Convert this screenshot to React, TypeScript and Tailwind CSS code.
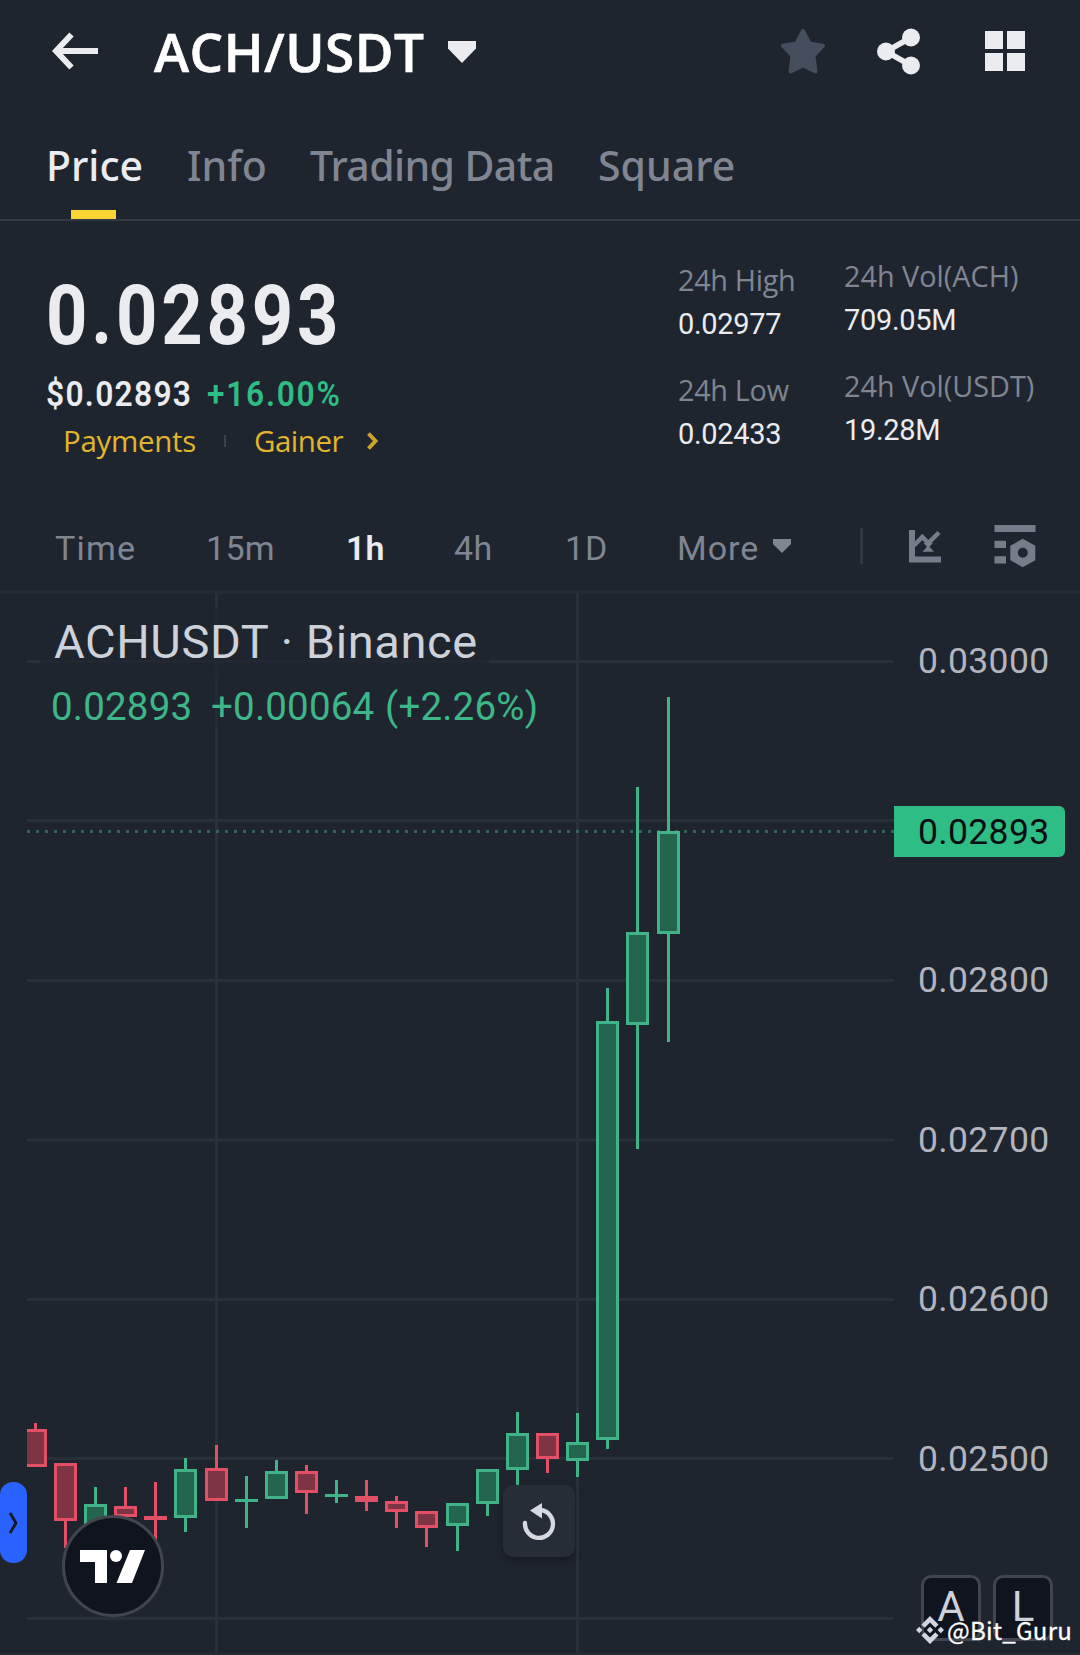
import type { ReactNode } from "react";

type Candle = {
  x: number;
  top: number;
  bottom: number;
  high: number;
  low: number;
  up: boolean;
};

const candles: Candle[] = [
  { x: 24, top: 1429, bottom: 1467, high: 1423, low: 1467, up: false },
  { x: 54, top: 1463, bottom: 1521, high: 1463, low: 1548, up: false },
  { x: 84, top: 1504, bottom: 1530, high: 1487, low: 1530, up: true },
  { x: 114, top: 1506, bottom: 1517, high: 1487, low: 1517, up: false },
  { x: 144, top: 1516, bottom: 1520, high: 1482, low: 1542, up: false },
  { x: 174, top: 1469, bottom: 1518, high: 1458, low: 1532, up: true },
  { x: 205, top: 1468, bottom: 1501, high: 1445, low: 1501, up: false },
  { x: 235, top: 1499, bottom: 1502, high: 1476, low: 1528, up: true },
  { x: 265, top: 1471, bottom: 1499, high: 1460, low: 1499, up: true },
  { x: 295, top: 1471, bottom: 1493, high: 1465, low: 1514, up: false },
  { x: 325, top: 1494, bottom: 1497, high: 1480, low: 1503, up: true },
  { x: 355, top: 1496, bottom: 1502, high: 1480, low: 1511, up: false },
  { x: 385, top: 1501, bottom: 1512, high: 1496, low: 1528, up: false },
  { x: 415, top: 1511, bottom: 1528, high: 1511, low: 1547, up: false },
  { x: 446, top: 1503, bottom: 1526, high: 1503, low: 1551, up: true },
  { x: 476, top: 1469, bottom: 1504, high: 1469, low: 1516, up: true },
  { x: 506, top: 1433, bottom: 1470, high: 1412, low: 1485, up: true },
  { x: 536, top: 1433, bottom: 1459, high: 1433, low: 1473, up: false },
  { x: 566, top: 1442, bottom: 1461, high: 1413, low: 1477, up: true },
  { x: 596, top: 1021, bottom: 1440, high: 988, low: 1449, up: true },
  { x: 626, top: 932, bottom: 1025, high: 787, low: 1149, up: true },
  { x: 657, top: 831, bottom: 934, high: 697, low: 1042, up: true },
];

const gridRows = [661.5, 820.5, 980.5, 1140, 1299.5, 1458.5, 1618.5];
const gridCols = [216.5, 577.5];

function CandleShape({ x, top, bottom, high, low, up }: Candle) {
  const line = up ? "#40b488" : "#e34f65";
  const fill = up ? "#24654f" : "#7f3444";
  const h = bottom - top;

  return (
    <g>
      {high < top && <rect x={x + 10} y={high} width={3} height={top - high} fill={line} />}
      {low > bottom && <rect x={x + 10} y={bottom} width={3} height={low - bottom} fill={line} />}
      <rect x={x} y={top} width={23} height={h} fill={line} />
      {h > 6 && <rect x={x + 3} y={top + 3} width={17} height={h - 6} fill={fill} />}
    </g>
  );
}

function CandleChart() {
  return (
    <svg className="block h-[1063px] w-[1080px]" viewBox="0 592 1080 1063">
      <defs>
        <clipPath id="plot">
          <rect x="27" y="592" width="867" height="1063" />
        </clipPath>
      </defs>
      <g clipPath="url(#plot)">
        {gridRows.map((y) => (
          <rect key={y} x="27" y={y - 1.5} width="867" height="3" fill="#2a303a" />
        ))}
        {gridCols.map((x) => (
          <rect key={x} x={x - 1.5} y="592" width="3" height="1061" fill="#2a303a" />
        ))}
        <line x1="27" y1="831.5" x2="894" y2="831.5" stroke="#356558" strokeWidth="3" strokeDasharray="3 6" />
        {candles.map((c) => (
          <CandleShape key={c.x} {...c} />
        ))}
      </g>
      <rect x="0" y="1652.5" width="1080" height="2.5" fill="#262c36" />
    </svg>
  );
}

function Stat({ label, value }: { label: string; value: string }) {
  return (
    <div className="flex h-[110px] flex-col gap-[16px] whitespace-nowrap text-[29px] leading-none">
      <span className="font-['Open_Sans',sans-serif] text-[28.8px] leading-[29px] text-[#7f8591]">{label}</span>
      <span className="tracking-[-0.3px] text-[#eaecef]">{value}</span>
    </div>
  );
}

function ScaleButton({ children }: { children: ReactNode }) {
  return (
    <div className="flex h-[66px] w-[60px] justify-center rounded-[10px] border-3 border-[#42454f] bg-[#10141e] pt-[8px] text-[42px] leading-none text-[#cdd1da]">
      {children}
    </div>
  );
}

export default function App() {
  return (
    <div className="flex h-[1655px] w-[1080px] flex-col overflow-hidden bg-[#1f252f] font-['Roboto',sans-serif] text-[#eaecef]">
      {/* header */}
      <header className="flex h-[102px] shrink-0 items-center pl-[52px]">
        <svg className="h-[38px] w-[46px]" viewBox="0 0 46 38" fill="none" stroke="#eaecf0" strokeWidth="6">
          <path d="M19.5 2.500 4 19l15.500 16.500M4 19h42" />
        </svg>
        <h1 className="ml-[56px] w-[276px] whitespace-nowrap font-['Open_Sans',sans-serif] text-[53px] font-semibold leading-none tracking-[0.5px] text-white [-webkit-text-stroke:0.6px_#fff]">
          ACH/USDT
        </h1>
        <svg className="ml-[18px] mt-[1px] h-[22px] w-[28px]" viewBox="0 0 28 22" fill="#eaecf0">
          <path d="M0 0h28v7.500L14 22 0 7.500z" />
        </svg>
        <svg className="ml-[304px] mt-[1px] h-[47px] w-[46px]" viewBox="0 0 46 47">
          <path
            d="M23 3 29.500 15.500 43 17.700 33.500 27.700 35.500 43.500 23 37.500 10.500 43.500 12.500 27.700 3 17.700 16.500 15.500z"
            fill="#454e5c"
            stroke="#454e5c"
            strokeWidth="4"
            strokeLinejoin="round"
          />
        </svg>
        <svg className="ml-[51px] h-[47px] w-[43px]" viewBox="0 0 43 47" fill="#eaecf0">
          <path d="M34 9.500 9 23.500l25 14" fill="none" stroke="#eaecf0" strokeWidth="5.500" />
          <circle cx="34" cy="9.500" r="9" />
          <circle cx="9" cy="23.500" r="9" />
          <circle cx="34" cy="37.500" r="9" />
        </svg>
        <div className="ml-[65px] grid grid-cols-2 gap-[4px]">
          <i className="h-[18px] w-[18px] bg-[#eaecf0]" />
          <i className="h-[18px] w-[18px] bg-[#eaecf0]" />
          <i className="h-[18px] w-[18px] bg-[#eaecf0]" />
          <i className="h-[18px] w-[18px] bg-[#eaecf0]" />
        </div>
      </header>

      {/* tabs */}
      <nav className="flex h-[119px] shrink-0 whitespace-nowrap border-b-2 border-[#333a46] pl-[46px] pt-[43px] font-['Noto_Sans',sans-serif] text-[41px] font-medium leading-none text-[#7f8591]">
        <div className="flex w-[141px] flex-col">
          <span className="text-[#eaecef]">Price</span>
          <i className="ml-[25px] mt-[24px] h-[9px] w-[45px] bg-[#fbd535]" />
        </div>
        <span className="w-[123px]">Info</span>
        <span className="w-[288px] tracking-[-0.6px]">Trading Data</span>
        <span>Square</span>
      </nav>

      {/* price summary */}
      <section className="flex h-[283px] shrink-0">
        <div className="w-[678px] whitespace-nowrap pl-[46px] pt-[53px]">
          <div className="origin-left scale-x-[0.87] text-[83px] font-bold leading-none tracking-[4.4px]">0.02893</div>
          <div className="mt-[20px] flex text-[34.5px] font-semibold leading-[34px]">
            <span className="w-[161px] origin-left scale-x-[0.92] tracking-[1.4px]">$0.02893</span>
            <span className="origin-left scale-x-[0.92] tracking-[1.9px] text-[#2ebd85]">+16.00%</span>
          </div>
          <div className="mt-[15px] flex items-center pl-[17px] font-['Open_Sans',sans-serif] text-[29.5px] leading-none text-[#e2b52c]">
            <span className="w-[161px] tracking-[-0.3px]">Payments</span>
            <i className="h-[12px] w-[2px] bg-[#39414d]" />
            <span className="ml-[28px] w-[113px] tracking-[-0.5px]">Gainer</span>
            <svg className="h-[18px] w-[11px]" viewBox="0 0 11 18" fill="none" stroke="#cfa42c" strokeWidth="4">
              <path d="M1.500 1.500 8.500 9l-7 7.500" />
            </svg>
          </div>
        </div>
        <div className="w-[166px] pt-[44px] tracking-[-0.3px]">
          <Stat label="24h High" value="0.02977" />
          <Stat label="24h Low" value="0.02433" />
        </div>
        <div className="pt-[40px]">
          <Stat label="24h Vol(ACH)" value="709.05M" />
          <Stat label="24h Vol(USDT)" value="19.28M" />
        </div>
      </section>

      {/* intervals */}
      <div className="flex h-[88px] shrink-0 items-center whitespace-nowrap pl-[55px] text-[34px] leading-none text-[#7f8591]">
        <span className="w-[151px] tracking-[1.2px]">Time</span>
        <span className="w-[140px] tracking-[0.3px]">15m</span>
        <span className="w-[108px] font-semibold text-[#eaecef]">1h</span>
        <span className="w-[111px] tracking-[0.5px]">4h</span>
        <span className="w-[112px] tracking-[1px]">1D</span>
        <span className="w-[96px] tracking-[1px]">More</span>
        <svg className="mb-[4px] h-[14px] w-[18px]" viewBox="0 0 18 14" fill="#7f8591">
          <path d="M0 0h18v5L9 14 0 5z" />
        </svg>
        <i className="ml-[69px] mb-[4px] h-[36px] w-[3px] bg-[#303742]" />
        <svg className="ml-[46px] mb-[4px] h-[33px] w-[32px]" viewBox="0 0 32 33" fill="#767c89">
          <path d="M0 0h6v26.500h26v6H0z" />
          <path d="M5 15.500 13.300 7l6 6L30 2.500" fill="none" stroke="#767c89" strokeWidth="4.500" />
          <path d="M14.500 13h9.500l-3.500 3.700 4.500 5h-11.500l4.500-5z" />
        </svg>
        <svg className="ml-[53px] mb-[3px] h-[43px] w-[42px]" viewBox="0 0 42 43" fill="#767c89">
          <path d="M.5 0h41v7H.5zM.5 15.700h11.500v7.300H.5zM.5 31.300h11.500v7.300H.5z" />
          <path fillRule="evenodd" d="M28.800 13.700 41.300 20.700v14.500l-12.500 7-12.500-7V20.700zM28.800 22.700a5 5 0 1 0 0 10 5 5 0 1 0 0-10z" />
        </svg>
      </div>

      {/* chart */}
      <main className="relative h-[1063px] shrink-0">
        <CandleChart />
        <div className="absolute inset-x-0 top-[-2px] h-[4px] bg-[#252b35]" />

        <div className="absolute left-[40px] top-[15px] whitespace-nowrap leading-none">
          <div className="h-[69px] w-[449px] bg-[#1f252f]/75 pl-[14px] pt-[11px] text-[47px] tracking-[0.6px] text-[#cdd1da]">
            ACHUSDT · Binance
          </div>
          <div className="flex h-[52px] w-[505px] bg-[#1f252f]/50 pl-[11px] pt-[12px] text-[38.5px] tracking-[0.2px] text-[#3db68a]">
            <span className="w-[160px]">0.02893</span>
            <span className="w-[174px]">+0.00064</span>
            <span>(+2.26%)</span>
          </div>
        </div>

        {/* price scale */}
        <div className="absolute left-[918px] top-[52px] flex flex-col text-[35.5px] leading-none tracking-[0.35px] text-[#b2b5be]">
          <span className="h-[319px]">0.03000</span>
          <span className="h-[160px]">0.02800</span>
          <span className="h-[159px]">0.02700</span>
          <span className="h-[160px]">0.02600</span>
          <span>0.02500</span>
        </div>
        <div className="absolute left-[894px] top-[214px] h-[51px] w-[171px] rounded-r-[6px] bg-[#2ebd85] pl-[24px] pt-[9px] text-[35.5px] leading-none tracking-[0.35px] text-[#0b0e11]">
          0.02893
        </div>

        <div className="absolute left-0 top-[890px] flex h-[81px] w-[27px] items-center justify-center rounded-[13px] bg-[#2962ff]">
          <svg className="h-[22px] w-[9px]" viewBox="0 0 9 22" fill="none" stroke="#131722" strokeWidth="2.800">
            <path d="M1 1l6 10-6 10" />
          </svg>
        </div>

        <div className="absolute left-[61.500px] top-[923px] flex h-[102px] w-[102px] items-center justify-center rounded-full border-3 border-[#42454f] bg-[#10141e]">
          <svg className="h-[33px] w-[65px]" viewBox="0 0 65 33" fill="#fff">
            <path d="M0 0h27v33H15V12H0zM50 0h15L52 33H36.500z" />
            <circle cx="36" cy="6" r="6" />
          </svg>
        </div>

        <div className="absolute left-[503px] top-[893px] h-[72px] w-[72px] rounded-[10px] bg-[#272d37] shadow-[0_4px_8px_rgba(0,0,0,0.3)]">
          <svg className="h-[72px] w-[72px]" viewBox="0 0 72 72" fill="none">
            <path d="M22 38a14 14 0 1 0 16-13" stroke="#d6d9e0" strokeWidth="4.300" strokeLinecap="round" />
            <path d="M27 25.500 39 18v15.500z" fill="#d6d9e0" />
          </svg>
        </div>

        <div className="absolute left-[921px] top-[983px] flex gap-[12px]">
          <ScaleButton>A</ScaleButton>
          <ScaleButton>L</ScaleButton>
        </div>

        <div className="absolute left-[916px] top-[1024px] flex items-center text-white">
          <svg className="h-[28px] w-[28px]" viewBox="0 0 28 28" fill="#d3d6de">
            <path d="M14 0l8.500 8.500-3.200 3.200L14 6.400l-5.300 5.300-3.200-3.200zM14 28l8.500-8.500-3.200-3.200L14 21.600l-5.300-5.300-3.200 3.200zM14 10.800l3.200 3.200-3.200 3.200-3.200-3.200zM3.200 10.800 6.400 14l-3.200 3.200L0 14zM24.800 10.800 28 14l-3.200 3.200-3.200-3.200z" />
          </svg>
          <span className="ml-[3px] whitespace-nowrap font-['Noto_Sans_CJK_SC',sans-serif] text-[24px] font-normal leading-none tracking-[0.3px] [-webkit-text-stroke:0.3px_#fff]">
            @Bit_Guru
          </span>
        </div>
      </main>
    </div>
  );
}
